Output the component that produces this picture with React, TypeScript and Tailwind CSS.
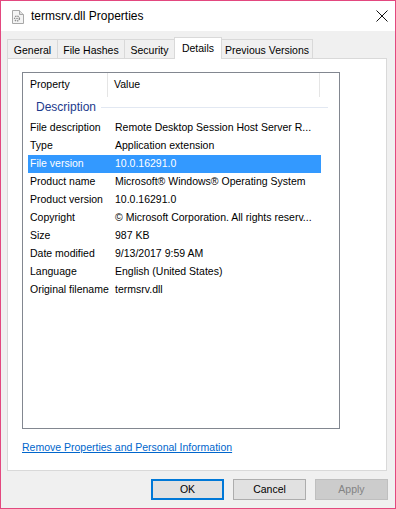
import React from 'react';

const rows: [string, string][] = [
  ['File description', 'Remote Desktop Session Host Server R...'],
  ['Type', 'Application extension'],
  ['File version', '10.0.16291.0'],
  ['Product name', 'Microsoft® Windows® Operating System'],
  ['Product version', '10.0.16291.0'],
  ['Copyright', '© Microsoft Corporation. All rights reserv...'],
  ['Size', '987 KB'],
  ['Date modified', '9/13/2017 9:59 AM'],
  ['Language', 'English (United States)'],
  ['Original filename', 'termsrv.dll'],
];

function FileIcon() {
  return (
    <svg width="12" height="14" viewBox="0 0 12 14">
      <path d="M0.5 0.5h7l4 4v9h-11z" fill="#f4f4f4" stroke="#a8a8a8" />
      <path d="M7.5 0.5v4h4" fill="#e0e0e0" stroke="#a8a8a8" />
      <circle cx="5" cy="8.5" r="2.4" fill="none" stroke="#8c8c8c" strokeWidth="1.4" strokeDasharray="1.3 0.8" />
      <circle cx="5" cy="8.5" r="0.8" fill="#8c8c8c" />
    </svg>
  );
}

export default function App() {
  return (
    <div
      className="w-[396px] h-[509px] border border-[#e3487f] bg-[#f0f0f0] flex flex-col text-[10.5px] text-black"
      style={{ fontFamily: '"Liberation Sans", Arial, sans-serif' }}
    >
      {/* title bar */}
      <div className="h-[30px] bg-white flex items-center shrink-0">
        <div className="ml-[11px] mt-[1px] flex"><FileIcon /></div>
        <div className="ml-[7px] text-[12px]">termsrv.dll Properties</div>
        <div className="ml-auto mr-[7px] w-[12px] h-[12px] flex">
          <svg width="12" height="12" viewBox="0 0 12 12">
            <path d="M0.5 0.5l11 11M11.5 0.5l-11 11" stroke="#111" strokeWidth="1" />
          </svg>
        </div>
      </div>

      {/* tabs */}
      <div className="flex items-end ml-[6px] mt-[6px] h-[22px] shrink-0">
        <div className="w-[51px] h-[20px] flex justify-center pt-[3px] border border-b-0 border-[#d9d9d9]">General</div>
        <div className="w-[68px] h-[20px] -ml-[1px] flex justify-center pt-[3px] border border-b-0 border-[#d9d9d9]">File Hashes</div>
        <div className="w-[51px] h-[20px] -ml-[1px] flex justify-center pt-[3px] border border-b-0 border-[#d9d9d9]">Security</div>
        <div className="w-[48px] h-[22px] -ml-[1px] flex justify-center pt-[3px] bg-white border border-b-0 border-[#d9d9d9] relative z-10">Details</div>
        <div className="w-[92px] h-[20px] -ml-[1px] flex justify-center pt-[3px] border border-b-0 border-[#d9d9d9]">Previous Versions</div>
      </div>

      {/* panel */}
      <div className="ml-[6px] w-[380px] h-[413px] -mt-[1px] bg-white border border-[#d9d9d9] flex flex-col shrink-0">
        <div className="ml-[14px] mt-[13px] w-[318px] h-[357px] border border-[#828790] flex flex-col">
          {/* header */}
          <div className="h-[24px] flex items-stretch shrink-0">
            <div className="w-[85px] pl-[7px] flex items-center border-r border-[#e5e5e5]">Property</div>
            <div className="w-[212px] pl-[6px] flex items-center border-r border-[#e5e5e5]">Value</div>
          </div>
          {/* group */}
          <div className="h-[22px] flex items-center shrink-0 pb-[2px]">
            <span className="ml-[13px] text-[#1c3a8c] text-[12px]">Description</span>
            <div className="ml-[5px] w-[227px] h-px bg-[#e2e8f2]" />
          </div>
          {rows.map(([k, v]) => {
            const sel = k === 'File version';
            return (
              <div
                key={k}
                className={
                  'h-[18px] ml-[5px] w-[293px] flex items-center whitespace-nowrap ' +
                  (sel ? 'bg-[#3399ff] text-white' : '')
                }
              >
                <div className="w-[87px] pl-[2px]">{k}</div>
                <div>{v}</div>
              </div>
            );
          })}
        </div>
        <div className="ml-[14px] mt-[11px] text-[#0066cc] underline">
          Remove Properties and Personal Information
        </div>
      </div>

      {/* buttons */}
      <div className="flex justify-end gap-[9px] mr-[7px] mt-[8px]">
        <div className="w-[73px] h-[21px] border-2 border-[#0078d7] bg-[#e1e1e1] flex items-center justify-center">OK</div>
        <div className="w-[73px] h-[21px] border border-[#adadad] bg-[#e1e1e1] flex items-center justify-center">Cancel</div>
        <div className="w-[73px] h-[21px] border border-[#bfbfbf] bg-[#cccccc] text-[#838383] flex items-center justify-center">Apply</div>
      </div>
    </div>
  );
}
